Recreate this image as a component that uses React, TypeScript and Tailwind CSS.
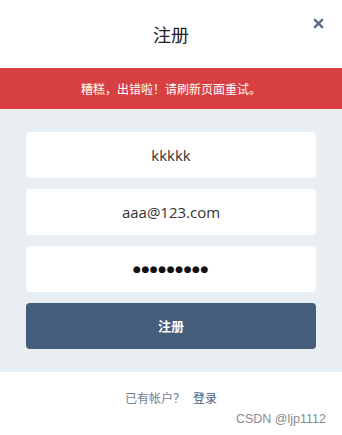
export default function App() {
  const cjk = { fontFamily: '"Noto Sans CJK SC", "Noto Sans", sans-serif' };
  return (
    <div className="w-[342px] h-[435px] bg-white relative overflow-hidden" style={cjk}>
      {/* header */}
      <div className="h-[68px] flex items-center justify-center relative">
        <h1 className="text-[18px] text-[#222] leading-none">注册</h1>
        <button className="absolute right-[18px] top-[18px] text-[#5b6f88]">
          <svg width="11" height="11" viewBox="0 0 12 12">
            <path d="M2 2 L10 10 M10 2 L2 10" stroke="currentColor" strokeWidth="2.6" strokeLinecap="round" />
          </svg>
        </button>
      </div>

      {/* error banner */}
      <div className="h-[41px] bg-[#d83f42] flex items-center justify-center">
        <span className="text-[12px] text-white">糟糕，出错啦！请刷新页面重试。</span>
      </div>

      {/* form */}
      <div className="bg-[#e9eef3] h-[263px] px-[26px] pt-[23px] flex flex-col gap-[11px]">
        <div className="h-[46px] bg-white rounded-[4px] flex items-center justify-center text-[15px] text-[#333]" style={{ fontFamily: '"Open Sans", sans-serif' }}>
          kkkkk
        </div>
        <div className="h-[46px] bg-white rounded-[4px] flex items-center justify-center text-[15px] text-[#333]" style={{ fontFamily: '"Open Sans", sans-serif' }}>
          aaa@123.com
        </div>
        <div className="h-[46px] bg-white rounded-[4px] flex items-center justify-center text-[#111]">
          <span className="text-[9px] tracking-[0.6px] leading-none" style={{ fontFamily: '"DejaVu Sans", sans-serif' }}>●●●●●●●●●</span>
        </div>
        <button className="h-[46px] bg-[#445d7a] rounded-[4px] flex items-center justify-center text-[13px] font-bold text-white">
          注册
        </button>
      </div>

      {/* footer */}
      <div className="flex justify-center pt-[17px] text-[12px]">
        <span className="text-[#6e7f94]">已有帐户？</span>
        <span className="ml-[8px] text-[#456285]">登录</span>
      </div>

      <div className="absolute right-[16px] bottom-[6px] text-[12.5px] text-[#8a8a8a]" style={{ fontFamily: '"Liberation Sans", sans-serif' }}>
        CSDN @ljp1112
      </div>
    </div>
  );
}
